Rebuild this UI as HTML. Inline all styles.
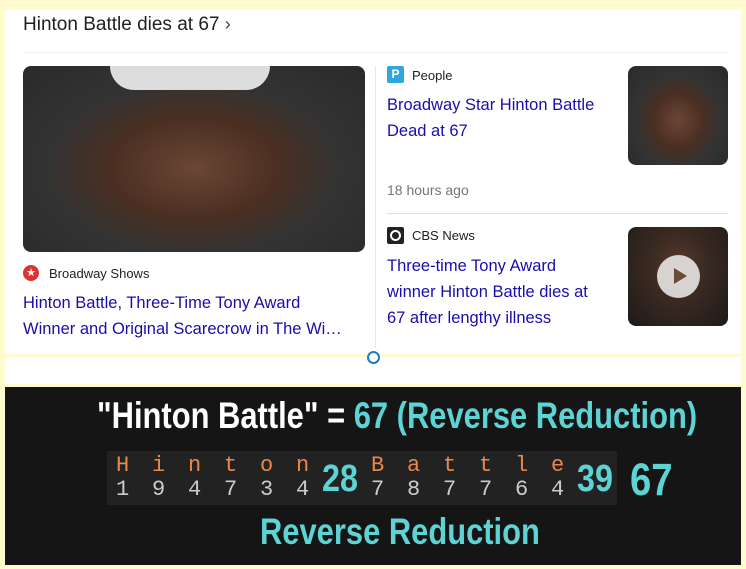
<!DOCTYPE html>
<html><head><style>
*{margin:0;padding:0;box-sizing:border-box}
body{width:746px;height:569px;background:#fffbcf;position:relative;overflow:hidden;font-family:"Liberation Sans",Arial,sans-serif}
.abs{position:absolute}
.panel{left:5px;top:10px;width:736px;height:344px;background:#fff}
.h{left:23px;top:14px;font-size:19px;color:#202124}
.link{color:#1a0dab;font-size:16.5px;line-height:26px}
.src{font-size:13px;color:#202124}
.photo{border-radius:8px;background:radial-gradient(ellipse at 50% 55%,#6b4634 0%,#4a2f22 35%,#333 60%,#2a2a2a 100%)}
.dark{left:5px;top:387px;width:736px;height:178px;background:#151515}
.w{font-family:"Liberation Sans",sans-serif;font-weight:bold;transform-origin:0 0;white-space:nowrap}
.cy{color:#5dd3d3}
.m{font-family:'Liberation Mono',monospace;font-size:22px;line-height:23px;letter-spacing:22.8px;white-space:pre}
</style></head><body>
<div class="abs" style="left:0;top:5px;width:746px;height:1px;background:#fff8b8"></div>
<div class="abs panel"></div>
<div class="abs h">Hinton Battle dies at 67 <span style="font-size:18px;color:#444">›</span></div>
<div class="abs" style="left:23px;top:52px;width:705px;height:1px;background:#eee"></div>
<div class="abs photo" style="left:23px;top:66px;width:342px;height:186px"></div>
<div class="abs" style="left:110px;top:66px;width:160px;height:24px;background:#ddd;border-radius:0 0 40px 40px"></div>
<div class="abs" style="left:23px;top:265px;width:16px;height:16px;border-radius:50%;background:#d33;color:#fff;font-size:11px;text-align:center;line-height:16px">★</div>
<div class="abs src" style="left:49px;top:266px">Broadway Shows</div>
<div class="abs link" style="left:23px;top:290px">Hinton Battle, Three-Time Tony Award<br>Winner and Original Scarecrow in The Wi…</div>
<div class="abs" style="left:375px;top:66px;width:1px;height:282px;background:#e8e8e8"></div>
<div class="abs" style="left:387px;top:66px;width:17px;height:17px;background:#2ea6de;border-radius:2px;color:#fff;font-weight:bold;font-size:12px;text-align:center;line-height:17px">P</div>
<div class="abs src" style="left:412px;top:68px">People</div>
<div class="abs link" style="left:387px;top:92px">Broadway Star Hinton Battle<br>Dead at 67</div>
<div class="abs" style="left:387px;top:182px;font-size:14px;color:#70757a">18 hours ago</div>
<div class="abs photo" style="left:628px;top:66px;width:100px;height:99px"></div>
<div class="abs" style="left:387px;top:213px;width:341px;height:1px;background:#ddd"></div>
<div class="abs" style="left:387px;top:227px;width:17px;height:17px;background:#222;border-radius:2px"><div style="margin:3px;width:11px;height:11px;border-radius:50%;border:2px solid #fff"></div></div>
<div class="abs src" style="left:412px;top:228px">CBS News</div>
<div class="abs link" style="left:387px;top:253px">Three-time Tony Award<br>winner Hinton Battle dies at<br>67 after lengthy illness</div>
<div class="abs photo" style="left:628px;top:227px;width:100px;height:99px;background:radial-gradient(ellipse at 50% 40%,#5a3a2a 0%,#3a2a22 40%,#1e1a18 100%)"></div>
<div class="abs" style="left:657px;top:255px;width:43px;height:43px;border-radius:50%;background:rgba(240,240,240,.85)"><div style="margin:13px 0 0 17px;width:0;height:0;border-left:13px solid #6a4a3a;border-top:8px solid transparent;border-bottom:8px solid transparent"></div></div>
<div class="abs" style="left:5px;top:357px;width:736px;height:27px;background:#fff"></div>
<div class="abs" style="left:367px;top:351px;width:13px;height:13px;border-radius:50%;border:2px solid #1a7fc0;background:#fff"></div>
<div class="abs dark"></div>
<div class="abs w" style="left:97px;top:395px;font-size:37px;color:#fff;transform:scaleX(0.835)">"Hinton Battle" = <span class="cy">67 (Reverse Reduction)</span></div>
<div class="abs" style="left:107px;top:451px;width:510px;height:54px;background:#222"></div>
<div class="abs m" style="left:116px;top:454px;color:#e8884a">Hinton</div>
<div class="abs m" style="left:116px;top:478px;color:#ccc">194734</div>
<div class="abs w cy" style="left:322px;top:458px;font-size:38px;transform:scaleX(0.85)">28</div>
<div class="abs m" style="left:371px;top:454px;color:#e8884a">Battle</div>
<div class="abs m" style="left:371px;top:478px;color:#ccc">787764</div>
<div class="abs w cy" style="left:577px;top:458px;font-size:38px;transform:scaleX(0.85)">39</div>
<div class="abs w cy" style="left:630px;top:454px;font-size:45px;transform:scaleX(0.85)">67</div>
<div class="abs w cy" style="left:260px;top:511px;font-size:37px;transform:scaleX(0.835)">Reverse Reduction</div>
</body></html>
